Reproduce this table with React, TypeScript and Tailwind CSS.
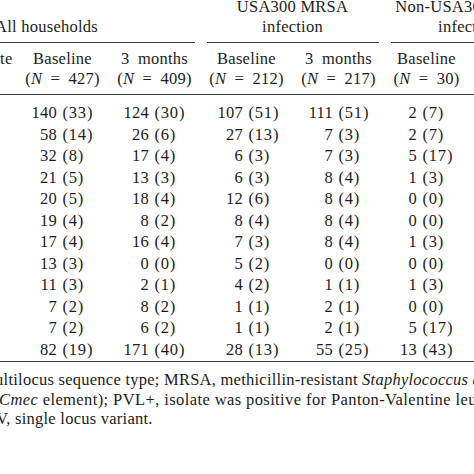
import React from "react"

type Cell = [string, string]

const rows: Cell[][] = [
  [["140", "(33)"], ["124", "(30)"], ["107", "(51)"], ["111", "(51)"], ["2", "(7)"]],
  [["58", "(14)"], ["26", "(6)"], ["27", "(13)"], ["7", "(3)"], ["2", "(7)"]],
  [["32", "(8)"], ["17", "(4)"], ["6", "(3)"], ["7", "(3)"], ["5", "(17)"]],
  [["21", "(5)"], ["13", "(3)"], ["6", "(3)"], ["8", "(4)"], ["1", "(3)"]],
  [["20", "(5)"], ["18", "(4)"], ["12", "(6)"], ["8", "(4)"], ["0", "(0)"]],
  [["19", "(4)"], ["8", "(2)"], ["8", "(4)"], ["8", "(4)"], ["0", "(0)"]],
  [["17", "(4)"], ["16", "(4)"], ["7", "(3)"], ["8", "(4)"], ["1", "(3)"]],
  [["13", "(3)"], ["0", "(0)"], ["5", "(2)"], ["0", "(0)"], ["0", "(0)"]],
  [["11", "(3)"], ["2", "(1)"], ["4", "(2)"], ["1", "(1)"], ["1", "(3)"]],
  [["7", "(2)"], ["8", "(2)"], ["1", "(1)"], ["2", "(1)"], ["0", "(0)"]],
  [["7", "(2)"], ["6", "(2)"], ["1", "(1)"], ["2", "(1)"], ["5", "(17)"]],
  [["82", "(19)"], ["171", "(40)"], ["28", "(13)"], ["55", "(25)"], ["13", "(43)"]],
]

// left padding of each data column so the numbers line up on their right edge
const cellPad = ["pl-[14.5px]", "pl-[14.5px]", "pl-[16.5px]", "pl-[14.5px]", "pl-[6.5px]"]

const headers = [
  ["Baseline", "427"],
  ["3 months", "409"],
  ["Baseline", "212"],
  ["3 months", "217"],
  ["Baseline", "30"],
  ["3 months", "28"],
]

const grid = "grid grid-cols-[124px_92px_92px_92px_92px_84px_84px]"

function ColHead({ label, n }: { label: string; n: string }) {
  return (
    <div className="flex flex-col items-center whitespace-nowrap leading-[20px] [word-spacing:4px]">
      <span>{label}</span>
      <span>
        (<i>N</i> = {n})
      </span>
    </div>
  )
}

export default function App() {
  return (
    <div
      className="w-[474px] h-[474px] overflow-hidden bg-white text-[#1c1c1c] text-[16.5px] tracking-[0.25px]"
      style={{ fontFamily: '"Liberation Serif", "Times New Roman", serif' }}
    >
      <div className="ml-[-107.5px] mt-[-3px] w-max">
        {/* group headers */}
        <div className={grid + " leading-[20px]"}>
          <div className="col-span-3 flex flex-col justify-end mx-[6px] pb-[5px] border-b border-[#3a3a3a]">
            <div className="text-center">All households</div>
          </div>
          <div className="col-span-2 mx-[6px] pb-[5px] border-b border-[#3a3a3a] text-center">
            <div>USA300 MRSA</div>
            <div>infection</div>
          </div>
          <div className="col-span-2 mx-[6px] pb-[5px] border-b border-[#3a3a3a] text-center">
            <div>Non-USA300 MRSA</div>
            <div>infection</div>
          </div>
        </div>

        {/* column headers */}
        <div className={grid + " pt-[5.5px] pb-[5.5px] border-b border-[#3a3a3a]"}>
          <div className="text-right pr-[4px] leading-[20px]">Isolate</div>
          {headers.map(([label, n], i) => (
            <ColHead key={i} label={label} n={n} />
          ))}
        </div>

        {/* data */}
        <div className="pt-[7px] pb-[1px] border-b border-[#3a3a3a]">
          {rows.map((row, r) => (
            <div key={r} className={grid + " leading-[21.5px]"}>
              <div />
              {row.map(([num, pct], c) => (
                <div key={c} className={"flex whitespace-nowrap " + cellPad[c]}>
                  <span className="inline-block w-[26px] text-right">{num}</span>
                  <span className="pl-[5.5px] tracking-[0.8px]">{pct}</span>
                </div>
              ))}
              <div />
            </div>
          ))}
        </div>
      </div>

      {/* footnote */}
      <div className="pt-[8px] leading-[19.5px] whitespace-nowrap">
        <div className="ml-[-18px]">
          multilocus sequence type; MRSA, methicillin-resistant <i>Staphylococcus aureus</i>;
        </div>
        <div className="ml-[-22px] tracking-[0.4px]">
          SC<i>Cmec</i> element); PVL+, isolate was positive for Panton-Valentine leukocidin; SLV,
        </div>
        <div className="ml-[-22px]">SLV, single locus variant.</div>
      </div>
    </div>
  )
}
